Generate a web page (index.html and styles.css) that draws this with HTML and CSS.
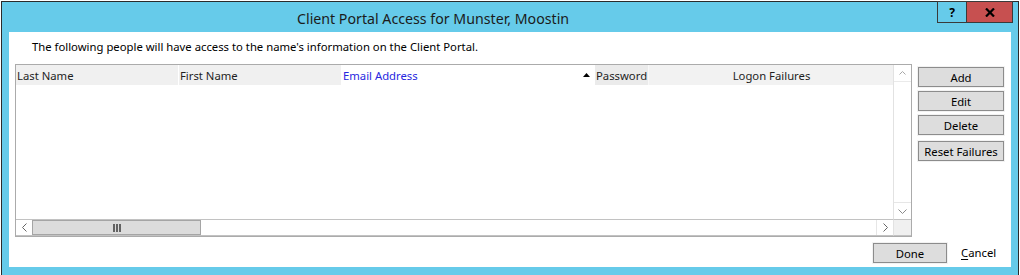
FILE: index.html
```html
<!DOCTYPE html>
<html lang="en">
<head>
  <meta charset="UTF-8" />
  <title>Client Portal Access</title>
  <link rel="stylesheet" href="styles.css">
</head>
<body>

  <!-- Dialog window -->
  <div class="window">
    <div class="titlebar">
      <span class="title">Client Portal Access for Munster, Moostin</span>
      <div class="caption-buttons">
        <div class="cap help">?</div>
        <div class="cap close">
          <svg width="10" height="9" viewBox="0 0 10 9"><path d="M1 0.5 L9 8.5 M9 0.5 L1 8.5" stroke="#000" stroke-width="2.2" fill="none"/></svg>
        </div>
      </div>
    </div>

    <div class="client">
      <p class="intro">The following people will have access to the name's information on the Client Portal.</p>

      <div class="main">
        <!-- List view -->
        <div class="list">
          <div class="list-content">
            <div class="list-header">
              <div class="col col-last">Last Name</div>
              <div class="col col-first">First Name</div>
              <div class="col col-email">
                <span>Email Address</span>
                <svg class="sort-arrow" width="7" height="4" viewBox="0 0 7 4"><path d="M3.5 0 L7 4 L0 4 Z" fill="#000"/></svg>
              </div>
              <div class="col col-pass">Password</div>
              <div class="col col-fail">Logon Failures</div>
            </div>
          </div>

          <div class="vscroll">
            <div class="arrow">
              <svg width="7" height="4" viewBox="0 0 7 4"><path d="M0.5 3.5 L3.5 0.5 L6.5 3.5" stroke="#a8a8a8" fill="none"/></svg>
            </div>
            <div class="arrow">
              <svg width="9" height="5" viewBox="0 0 9 5"><path d="M0.5 0.5 L4.5 4.5 L8.5 0.5" stroke="#8a8a8a" fill="none"/></svg>
            </div>
          </div>

          <div class="hscroll">
            <div class="arrow">
              <svg width="5" height="9" viewBox="0 0 5 9"><path d="M4.5 0.5 L0.5 4.5 L4.5 8.5" stroke="#666" fill="none"/></svg>
            </div>
            <div class="thumb">
              <span class="grip"></span><span class="grip"></span><span class="grip"></span>
            </div>
            <div class="track"></div>
            <div class="arrow arrow-right">
              <svg width="5" height="9" viewBox="0 0 5 9"><path d="M0.5 0.5 L4.5 4.5 L0.5 8.5" stroke="#666" fill="none"/></svg>
            </div>
          </div>

          <div class="corner"></div>
        </div>

        <!-- Side buttons -->
        <div class="side-buttons">
          <button class="btn">Add</button>
          <button class="btn">Edit</button>
          <button class="btn">Delete</button>
          <button class="btn btn-reset">Reset Failures</button>
        </div>
      </div>

      <div class="footer">
        <button class="btn btn-done">Done</button>
        <span class="link"><u>C</u>ancel</span>
      </div>
    </div>
  </div>

</body>
</html>
```

FILE: styles.css
```css
body {
  margin: 0;
  padding: 0;
  background: #fff;
  font-family: "Noto Sans", "Open Sans", sans-serif;
  font-size: 11.3px;
  color: #000;
  overflow: hidden;
  height: 275px;
}

.window {
  box-sizing: border-box;
  width: 1018px;
  height: 274px;
  margin: 1px 0 0 1px;
  border: 1px solid #2b2b2b;
  border-bottom: none;
  background: #66cbea;
}

.titlebar {
  height: 30px;
  display: flex;
  align-items: flex-start;
}

.title {
  margin-left: 295px;
  margin-top: 7px;
  font-size: 14.2px;
  line-height: 20px;
  color: #1b1b1b;
  flex: 1;
}

.caption-buttons {
  display: flex;
  margin-top: -1px;
  margin-right: 5px;
}

.cap {
  box-sizing: border-box;
  height: 22px;
  border: 1px solid #3a3a3a;
  display: flex;
  align-items: center;
  justify-content: center;
}

.help {
  width: 29px;
  font-weight: bold;
  font-size: 12px;
  border-right: none;
}

.close {
  width: 47px;
  background: #c75050;
}

.client {
  margin: 0 7px;
  height: 235px;
  background: #fff;
  display: flex;
  flex-direction: column;
}

.intro {
  margin: 7px 0 9px 23px;
  line-height: 16px;
}

.main {
  display: flex;
  margin-left: 6px;
}

/* list view */
.list {
  box-sizing: border-box;
  width: 897px;
  height: 173px;
  border: 1px solid #ababab;
  display: grid;
  grid-template-columns: 1fr 18px;
  grid-template-rows: 1fr 17px;
}

.list-content {
  background: #fff;
}

.list-header {
  display: flex;
  height: 20px;
  background: #f0f0f0;
  color: #1e1e1e;
}

.col {
  box-sizing: border-box;
  line-height: 21px;
  padding-left: 1px;
  white-space: nowrap;
}

.col-last,
.col-first {
  width: 163px;
  border-right: 1px solid #fff;
}

.col-email {
  width: 253px;
  background: #fff;
  color: #2727e0;
  display: flex;
  align-items: center;
  justify-content: space-between;
  padding-right: 5px;
}

.col-pass {
  width: 54px;
  border-right: 1px solid #f8f8f8;
  background: #ebebeb;
}

.col-fail {
  flex: 1;
  text-align: center;
  background: #f2f2f2;
}

.vscroll {
  border-left: 1px solid #e2e2e2;
  background: #fff;
  display: flex;
  flex-direction: column;
  justify-content: space-between;
}

.vscroll .arrow {
  height: 17px;
  display: flex;
  align-items: center;
  justify-content: center;
  border-bottom: 1px solid #eaeaea;
  box-sizing: border-box;
}

.vscroll .arrow:last-child {
  border-bottom: none;
  border-top: 1px solid #e6e6e6;
}

.hscroll {
  border-top: 1px solid #c2c2c2;
  border-bottom: 1px solid #c2c2c2;
  display: flex;
  background: #fff;
}

.hscroll .arrow {
  width: 16px;
  display: flex;
  align-items: center;
  justify-content: center;
}

.hscroll .arrow-right {
  border-left: 1px solid #e6e6e6;
}

.thumb {
  box-sizing: border-box;
  width: 169px;
  background: #dcdcdc;
  border: 1px solid #a5a5a5;
  display: flex;
  align-items: center;
  justify-content: center;
  gap: 1px;
}

.grip {
  width: 2px;
  height: 8px;
  background: #636363;
}

.track {
  flex: 1;
}

.corner {
  background: #f0f0f0;
  border-top: 1px solid #c2c2c2;
  border-bottom: 1px solid #c2c2c2;
  border-left: 1px solid #e2e2e2;
}

/* buttons */
.side-buttons {
  display: flex;
  flex-direction: column;
  margin: 3px 0 0 6px;
  width: 86px;
}

.btn {
  box-sizing: border-box;
  height: 20px;
  padding: 0;
  margin-bottom: 4px;
  font-family: inherit;
  font-size: 11.3px;
  color: #000;
  background: #dddddd;
  border: 1px solid #8c8c8c;
  border-radius: 0;
  box-shadow: 0 0 0 1px #f2f2f2;
}

.btn-reset {
  margin-top: 2px;
}

.footer {
  display: flex;
  align-items: center;
  margin-top: 6px;
  padding-left: 864px;
}

.btn-done {
  width: 74px;
  margin: 0;
}

.link {
  margin-left: 14px;
  line-height: 20px;
}

.link u {
  text-decoration-thickness: 1px;
  text-underline-offset: 2px;
}
```
